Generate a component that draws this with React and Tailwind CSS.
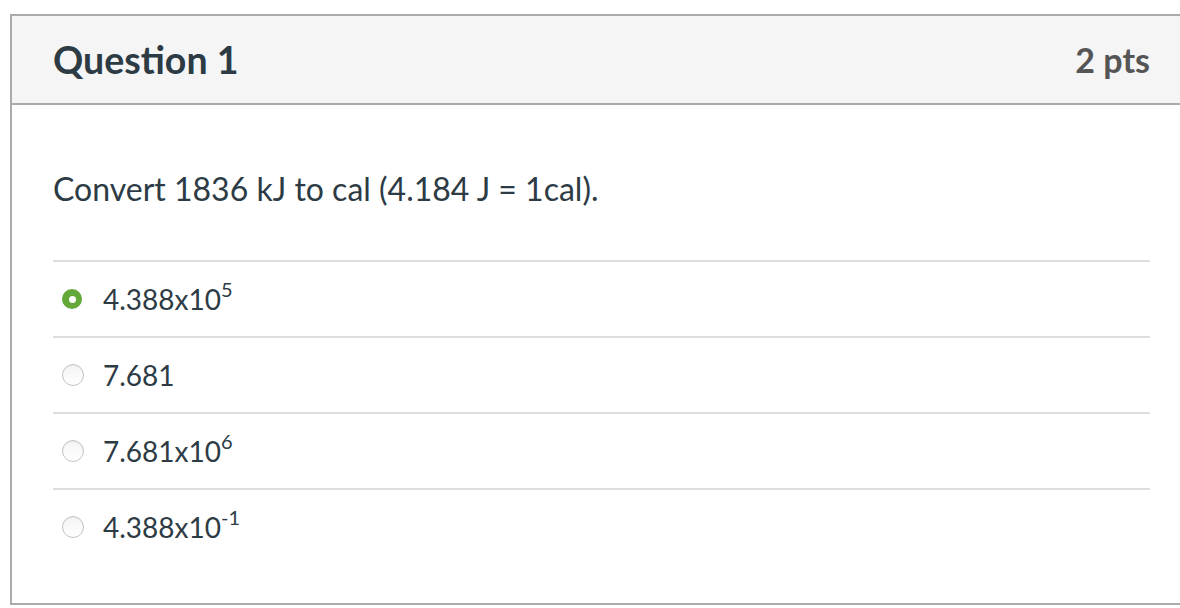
export default function App() {
  const answers = [
    { main: "4.388x10", sup: "5", selected: true },
    { main: "7.681", sup: null },
    { main: "7.681x10", sup: "6" },
    { main: "4.388x10", sup: "-1" },
  ];
  return (
    <div
      className="w-[1180px] h-[608px] bg-white pt-[14px] pl-[10px] overflow-hidden"
      style={{ fontFamily: "Lato, 'Open Sans', sans-serif" }}
    >
      <div className="h-[591px] border-2 border-r-0 border-[#ababab] flex flex-col">
        <div className="h-[89px] shrink-0 bg-[#f5f5f5] border-b-2 border-[#ababab] flex items-center justify-between pl-[41px] pr-[30px]">
          <h2 className="text-[37.5px] font-bold text-[#2d3b45] leading-none">Question 1</h2>
          <div className="text-[34px] font-bold text-[#555555] leading-none">2 pts</div>
        </div>
        <div className="pl-[41px] pr-[30px] pt-[64px]">
          <p className="text-[32px] leading-[40px] text-[#2d3b45]">
            Convert 1836 kJ to cal (4.184 J = 1cal).
          </p>
          <div className="mt-[51px]">
            {answers.map((a, i) => (
              <div
                key={i}
                className="h-[76px] border-t-2 border-[#dddddd] flex items-center"
              >
                {a.selected ? (
                  <span className="ml-[9px] w-[20px] h-[20px] rounded-full bg-[#64a83a] flex items-center justify-center">
                    <span className="w-[7px] h-[7px] rounded-full bg-white" />
                  </span>
                ) : (
                  <span className="ml-[9px] w-[22px] h-[22px] rounded-full border border-[#c4c4c4] bg-gradient-to-b from-[#f4f4f4] to-white shadow-[inset_0_1px_1px_rgba(0,0,0,0.05)]" />
                )}
                <span className={`${a.selected ? "ml-[21px]" : "ml-[19px]"} text-[28px] text-[#2d3b45] leading-none`}>
                  {a.main}
                  {a.sup && <sup className="text-[20px] top-[-0.65em]">{a.sup}</sup>}
                </span>
              </div>
            ))}
          </div>
        </div>
      </div>
    </div>
  );
}
